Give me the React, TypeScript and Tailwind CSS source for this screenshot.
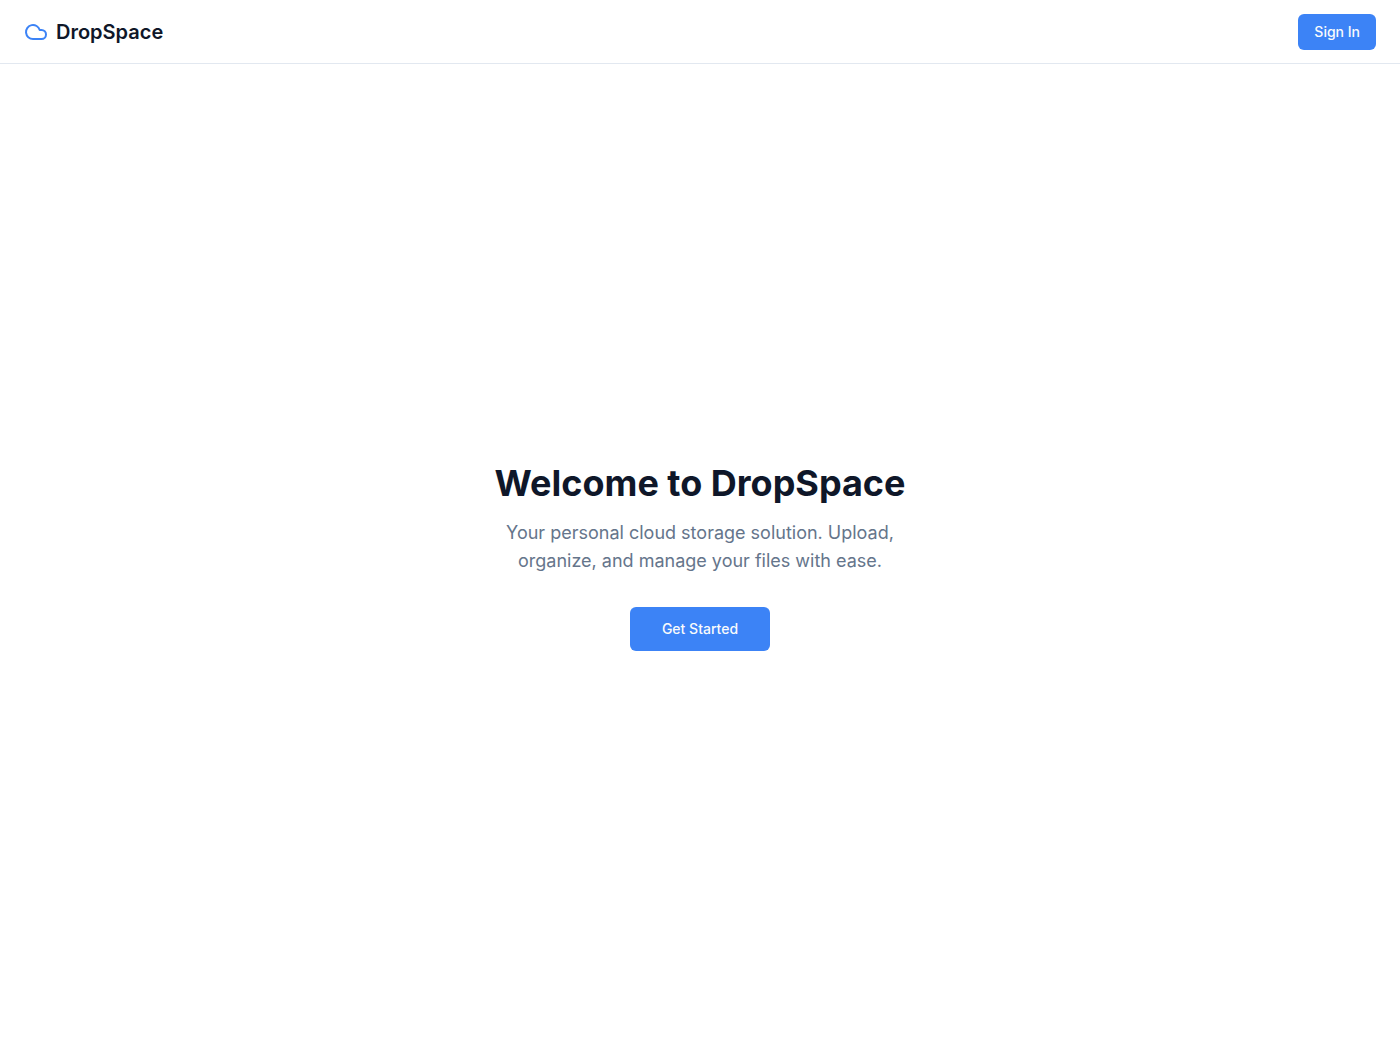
import { Cloud } from "lucide-react";

export default function App() {
  return (
    <div className="flex min-h-screen flex-col bg-white font-[Inter,sans-serif] text-[#0f1729] antialiased">
      <header className="flex h-16 items-center justify-between border-b border-[#e2e8f0] px-6">
        <a href="#" className="flex items-center gap-2">
          <Cloud className="h-6 w-6 text-[#3c83f6]" aria-hidden="true" />
          <span className="text-xl font-semibold">DropSpace</span>
        </a>
        <button
          type="button"
          className="h-9 rounded-md bg-[#3c83f6] px-4 text-sm font-medium text-[#f8fafc]"
        >
          Sign In
        </button>
      </header>
      <main className="flex flex-1 flex-col items-center justify-center px-4 text-center">
        <h1 className="mb-4 text-4xl font-bold">Welcome to DropSpace</h1>
        <p className="mb-8 max-w-md text-lg text-[#65758b]">
          Your personal cloud storage solution. Upload, organize, and manage your files with ease.
        </p>
        <button
          type="button"
          className="h-11 rounded-md bg-[#3c83f6] px-8 text-sm font-medium text-[#f8fafc]"
        >
          Get Started
        </button>
      </main>
    </div>
  );
}
